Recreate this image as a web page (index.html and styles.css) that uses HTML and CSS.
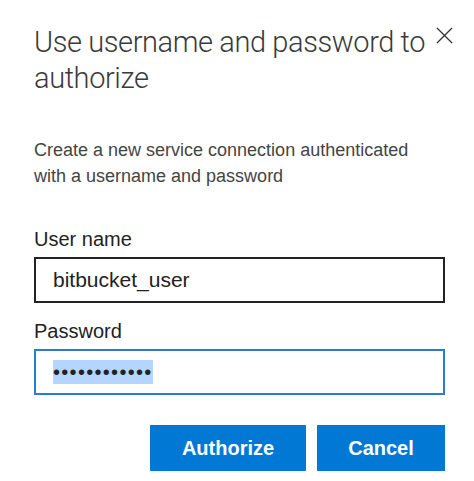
FILE: index.html
```html
<!DOCTYPE html>
<html lang="en">
<head>
<meta charset="utf-8">
<title>Authorize</title>
<link rel="stylesheet" href="styles.css">
</head>
<body>
<div class="dialog">
  <div class="header">
    <h1 class="title">Use username and password to authorize</h1>
    <button class="close" aria-label="Close">
      <svg width="17" height="17" viewBox="0 0 17 17"><path d="M1 1 L16 16 M16 1 L1 16" stroke="#333" stroke-width="1.3" fill="none"/></svg>
    </button>
  </div>
  <p class="desc">Create a new service connection authenticated with a username and password</p>
  <div class="field">
    <div class="label">User name</div>
    <div class="input">bitbucket_user</div>
  </div>
  <div class="field">
    <div class="label">Password</div>
    <div class="input focused"><span class="dots">••••••••••••</span></div>
  </div>
  <div class="actions">
    <button class="btn">Authorize</button>
    <button class="btn">Cancel</button>
  </div>
</div>
</body>
</html>
```
FILE: styles.css
```css
html, body {
  margin: 0;
  padding: 0;
  background: #fff;
}
body {
  font-family: "Liberation Sans", Arial, sans-serif;
  color: #333;
}
.dialog {
  padding: 24px 29px 0 34px;
}
.header {
  display: flex;
  align-items: flex-start;
}
.title {
  margin: 0;
  flex: 1;
  font-family: Roboto, sans-serif;
  font-weight: 300;
  font-size: 29px;
  line-height: 36px;
  letter-spacing: -0.4px;
  color: #3a3a3a;
}
.close {
  border: 0;
  background: none;
  padding: 0;
  margin-top: 3px;
  margin-right: -8px;
  width: 17px;
  height: 17px;
  display: flex;
}
.desc {
  margin: 41px 0 0;
  font-size: 18px;
  line-height: 26px;
  color: #444;
}
.field {
  margin-top: 38px;
}
.field + .field {
  margin-top: 16px;
}
.label {
  font-size: 20px;
  line-height: 24px;
  color: #222;
  margin-bottom: 6px;
}
.input {
  height: 46px;
  box-sizing: border-box;
  border: 2px solid #222;
  padding: 0 17px;
  display: flex;
  align-items: center;
  font-size: 21px;
  color: #222;
}
.input.focused {
  border: 2px solid #2b7bd0;
}
.dots {
  background: #b4d5fe;
  font-size: 20px;
  line-height: 24px;
  letter-spacing: 1.3px;
  color: #222;
}
.actions {
  display: flex;
  justify-content: flex-end;
  gap: 11px;
  margin-top: 30px;
}
.btn {
  border: 0;
  background: #0078d4;
  color: #fff;
  font-family: "Liberation Sans", Arial, sans-serif;
  font-weight: bold;
  font-size: 20px;
  height: 46px;
  padding: 0;
}
.btn:first-child {
  width: 156px;
}
.btn:last-child {
  width: 128px;
}
```
